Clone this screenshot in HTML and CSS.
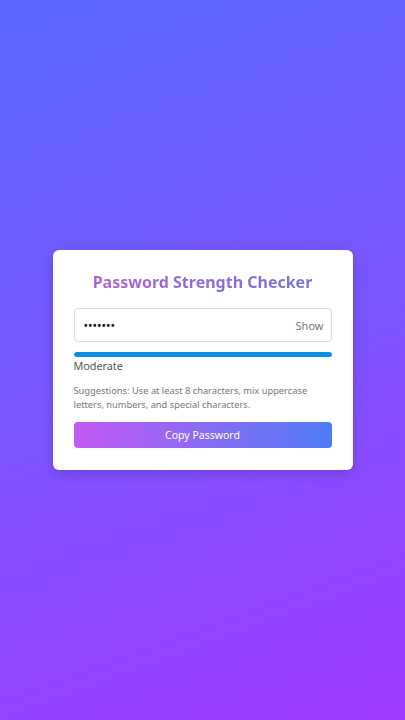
FILE: index.html
```html
<!DOCTYPE html>
<html lang="en">
<head>
  <meta charset="UTF-8">
  <meta name="viewport" content="width=device-width, initial-scale=1.0">
  <title>Password Strength Checker</title>
  <link rel="stylesheet" href="styles.css">
</head>
<body>
  <div class="container">
    <h1>Password Strength Checker</h1>
    <div class="input-wrap">
      <input type="password" id="password" value="secret1" />
      <button type="button" class="toggle" id="toggle">Show</button>
    </div>
    <div class="strength-bar"><div class="strength-fill" id="strength-fill"></div></div>
    <p class="strength-text" id="strength-text">Moderate</p>
    <p class="suggestions" id="suggestions">Suggestions: Use at least 8 characters, mix uppercase letters, numbers, and special characters.</p>
    <button type="button" class="copy-btn" id="copy">Copy Password</button>
  </div>
  <script>
    document.addEventListener('DOMContentLoaded', function () {
      const input = document.getElementById('password');
      const toggle = document.getElementById('toggle');

      toggle.addEventListener('click', function () {
        const hidden = input.type === 'password';
        input.type = hidden ? 'text' : 'password';
        toggle.textContent = hidden ? 'Hide' : 'Show';
      });

      document.getElementById('copy').addEventListener('click', function () {
        if (navigator.clipboard) {
          navigator.clipboard.writeText(input.value).catch(function () {});
        }
      });
    });
  </script>
</body>
</html>
```

FILE: styles.css
```css
body {
  font-family: "Noto Sans", "Open Sans", sans-serif;
  background: linear-gradient(160deg, #5a66fd 0%, #7a55ff 50%, #a03bff 100%);
  display: flex;
  justify-content: center;
  align-items: center;
  height: 100vh;
  margin: 0;
}

.container {
  background: #ffffff;
  padding: 20px 21px 22px;
  border-radius: 6px;
  box-shadow: 0 4px 12px rgba(0, 0, 0, 0.15);
  width: 300px;
  box-sizing: border-box;
  text-align: center;
}

h1 {
  margin: 0 0 14px;
  font-size: 16px;
  font-weight: 700;
  line-height: 24px;
  background: linear-gradient(90deg, #b35fd3, #6b78d6);
  -webkit-background-clip: text;
  background-clip: text;
  color: transparent;
}

.input-wrap {
  position: relative;
}

input[type="password"],
input[type="text"] {
  display: block;
  width: 100%;
  height: 34px;
  padding: 0 44px 0 9px;
  border: 1px solid #ddd;
  border-radius: 4px;
  box-sizing: border-box;
  font-family: inherit;
  font-size: 12px;
  color: #111;
}

input:focus {
  border-color: #8a6cf0;
  outline: none;
}

.toggle {
  position: absolute;
  right: 8px;
  top: 0;
  height: 34px;
  padding: 0;
  border: none;
  background: none;
  font-family: inherit;
  font-size: 11px;
  color: #777;
  cursor: pointer;
}

.strength-bar {
  margin-top: 10px;
  height: 5px;
  border-radius: 3px;
  background: #e6e6e6;
  overflow: hidden;
}

.strength-fill {
  width: 100%;
  height: 100%;
  background: #0a8de6;
  border-radius: 3px;
}

.strength-text {
  margin: 1px 0 0;
  text-align: left;
  font-size: 10.8px;
  line-height: 16px;
  color: #555;
}

.suggestions {
  margin: 10px 0 0;
  text-align: left;
  font-size: 9.3px;
  line-height: 14px;
  color: #777;
}

.copy-btn {
  display: block;
  width: 100%;
  height: 26px;
  margin-top: 10px;
  border: none;
  border-radius: 4px;
  background: linear-gradient(90deg, #c35af3, #4f7cf7);
  color: #ffffff;
  font-family: inherit;
  font-size: 10.5px;
  cursor: pointer;
}

.copy-btn:hover {
  opacity: 0.9;
}
```
